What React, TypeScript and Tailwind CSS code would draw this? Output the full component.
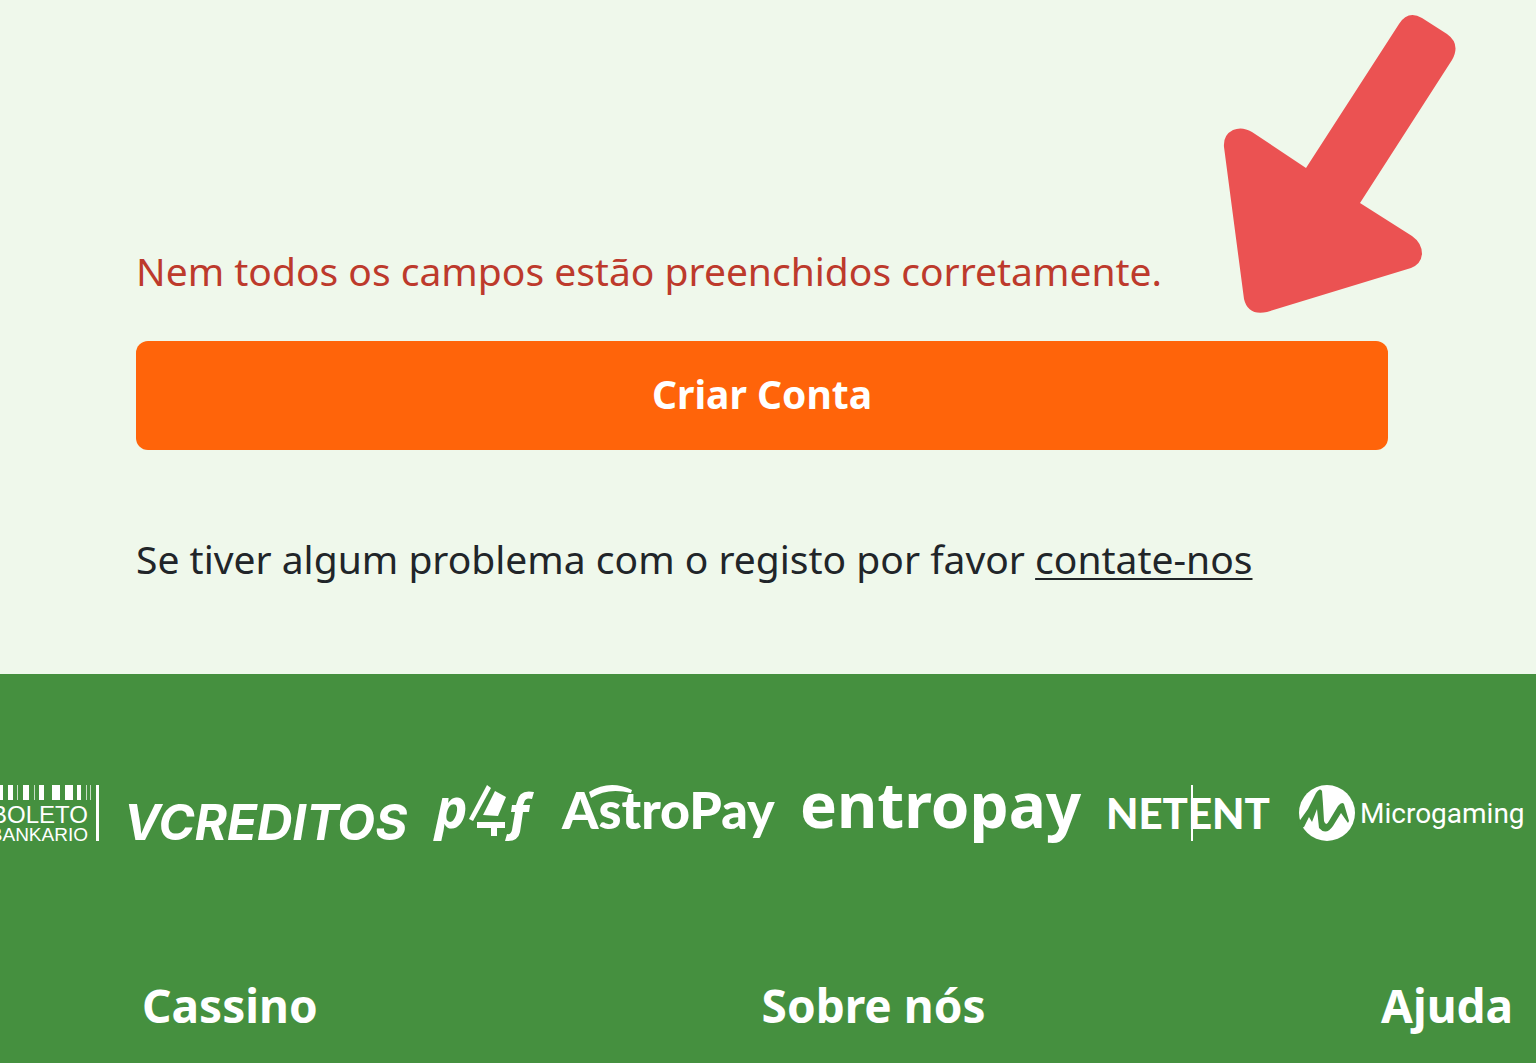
import type { ReactNode } from "react";

function Logo({ label, width, children }: { label: string; width: number; children: ReactNode }) {
  return (
    <li className="shrink-0">
      <svg
        role="img"
        aria-label={label}
        width={width}
        height={60}
        viewBox={`0 0 ${width} 60`}
        fill="currentColor"
        className="block overflow-visible"
      >
        {children}
      </svg>
    </li>
  );
}

const barcode = [
  [6, 6], [17, 5], [26, 1], [32, 6], [43, 1], [48, 5], [61, 8], [74, 8], [86, 4], [95, 1], [99, 1],
];

function PartnerLogos() {
  return (
    <ul className="flex justify-end gap-7 pr-2 text-white">
      <Logo label="Boleto Bankario" width={108}>
        {barcode.map(([x, w]) => (
          <rect key={x} x={x} y={1} width={w} height={15} opacity={w === 1 ? 0.7 : 1} />
        ))}
        <rect x={105} y={1} width={3} height={56} />
        <text x={97} y={39} textAnchor="end" fontSize={24} className="font-['Liberation_Sans',sans-serif]">BOLETO</text>
        <text x={97} y={57} textAnchor="end" fontSize={19} className="font-['Liberation_Sans',sans-serif]">BANKARIO</text>
      </Logo>
      <Logo label="VCreditos" width={279}>
        <text x={-3} y={56} fontSize={49} className="font-['Inter',sans-serif] font-bold italic">VCREDITOS</text>
      </Logo>
      <Logo label="p4f" width={100}>
        <text x={1} y={44} fontSize={55} className="font-['Open_Sans',sans-serif] font-bold italic">p</text>
        <path d="M53 1 57 4 39 37 35 35Z" />
        <path d="M61 7 72 13 64 32 49 31Z" />
        <path d="M43 38H71V44H63V52H57V44H43Z" />
        <path d="M100 8 98 15Q91 13 90 19L89 21H96L95 28H89L86 48Q84 58 71 57L73 50Q77 51 78 46L81 28H77L78 21H82L83 18Q85 5 100 8Z" />
      </Logo>
      <Logo label="AstroPay" width={212}>
        <text x={0} y={45} fontSize={52} className="font-['Lato',sans-serif] font-black">AstroPay</text>
        <path d="M27 8Q48-5 70 6L69 9Q46 3 29 14Z" />
      </Logo>
      <Logo label="entropay" width={279}>
        <text x={-2} y={44} fontSize={62} className="font-['Noto_Sans',sans-serif] font-bold">entropay</text>
      </Logo>
      <Logo label="NetEnt" width={162}>
        <text x={-3} y={45} fontSize={42} className="font-['Lato',sans-serif] font-black">NETENT</text>
        <rect x={82} y={1} width={2} height={56} />
      </Logo>
      <Logo label="Microgaming" width={229}>
        <circle cx={28} cy={29} r={28} />
        <path
          d="M-1 39 9 25 17 9Q21 3 23 7L24 20 25 37Q27 43 30 37L39 22Q43 17 45 20L50 37 49 39 42 29 34 42Q27 52 20 44L18 25 13 38 10 33 5 43 1 44Z"
          className="fill-[#45903f]"
        />
        <text x={61} y={39} fontSize={28} className="font-['Roboto',sans-serif] font-normal">Microgaming</text>
      </Logo>
    </ul>
  );
}

export default function App() {
  return (
    <div className="relative flex min-h-screen flex-col overflow-hidden bg-[#eff8eb] font-['Noto_Sans',sans-serif] text-[39px] leading-[54px]">
      <svg
        aria-hidden="true"
        width={240}
        height={308}
        viewBox="1220 10 240 308"
        className="absolute top-[10px] right-[76px] text-[#eb5252]"
        fill="currentColor"
      >
        <path d="M1306 168 1399 24Q1408 10 1422 18L1447 34Q1461 44 1452 60L1360 203 1412 236Q1422 243 1422 254 1421 264 1411 268L1267 312Q1248 316 1244 299L1224 147Q1223 135 1233 130 1242 126 1252 132Z" />
      </svg>
      <main className="pt-[244px] pr-[148px] pb-[88px] pl-[136px]">
        <p role="alert" className="text-[#bd3a2c]">Nem todos os campos estão preenchidos corretamente.</p>
        <button type="button" className="mt-[43px] block h-[109px] w-full rounded-xl bg-[#ff640a] pb-1 font-bold text-white">
          Criar Conta
        </button>
        <p className="mt-[82px] text-[#212529]">
          Se tiver algum problema com o registo por favor{" "}
          <a href="#contato" className="underline decoration-2 underline-offset-4">contate-nos</a>
        </p>
      </main>
      <footer className="flex-1 bg-[#45903f] pt-[110px] pb-7 text-white">
        <PartnerLogos />
        <div className="mt-[134px] grid grid-cols-[4fr_4fr_1fr] pl-[142px] text-[46px] font-bold">
          <h2>Cassino</h2>
          <h2 className="whitespace-nowrap">Sobre nós</h2>
          <h2>Ajuda</h2>
        </div>
      </footer>
    </div>
  );
}
